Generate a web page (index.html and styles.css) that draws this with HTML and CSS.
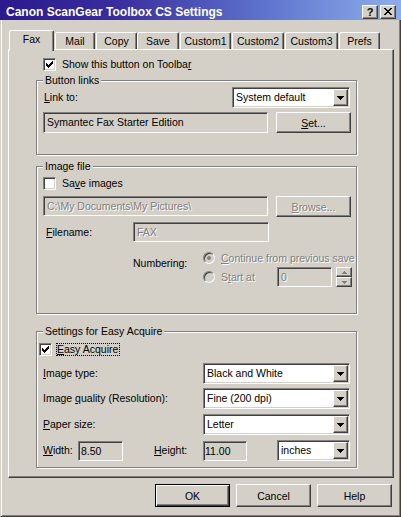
FILE: index.html
```html
<!DOCTYPE html>
<html>
<head>
<meta charset="utf-8">
<title>Canon ScanGear Toolbox CS Settings</title>
<link rel="stylesheet" href="styles.css">
</head>
<body>
<div class="window">
  <div class="titlebar">
    <span class="title">Canon ScanGear Toolbox CS Settings</span>
    <span class="tb-btn help">?</span>
    <span class="tb-btn close"><svg width="8" height="7" viewBox="0 0 8 7" shape-rendering="crispEdges"><path d="M0 0h2v1h-2zM6 0h2v1h-2zM1 1h2v1h-2zM5 1h2v1h-2zM2 2h4v1h-4zM3 3h2v1h-2zM2 4h4v1h-4zM1 5h2v1h-2zM5 5h2v1h-2zM0 6h2v1h-2zM6 6h2v1h-2z" fill="#000"/></svg></span>
  </div>
  <div class="frame">
    <div class="tabs">
      <div class="tab sel t-fax">Fax</div>
      <div class="tab t-mail">Mail</div>
      <div class="tab t-copy">Copy</div>
      <div class="tab t-save">Save</div>
      <div class="tab t-c1">Custom1</div>
      <div class="tab t-c2">Custom2</div>
      <div class="tab t-c3">Custom3</div>
      <div class="tab t-prefs">Prefs</div>
    </div>
    <div class="panel">
      <div class="check-row show-row">
        <span class="cb"><svg width="7" height="7" viewBox="0 0 7 7" shape-rendering="crispEdges"><path d="M6 0h1v1h-1zM5 1h2v1h-2zM0 2h1v1h-1zM4 2h3v1h-3zM0 3h2v1h-2zM3 3h3v1h-3zM0 4h5v1h-5zM1 5h3v1h-3zM2 6h1v1h-1z" fill="#000"/></svg></span>
        <span class="cb-label">Show this button on Toolba<u>r</u></span>
      </div>

      <div class="group g1">
        <div class="legend">Button links</div>
        <div class="row link-row">
          <span class="lbl"><u>L</u>ink to:</span>
          <div class="select w-link"><span class="val">System default</span><span class="drop"><svg width="7" height="4" viewBox="0 0 7 4" shape-rendering="crispEdges"><path d="M0 0h7v1h-7zM1 1h5v1h-5zM2 2h3v1h-3zM3 3h1v1h-1z" fill="#000"/></svg></span></div>
        </div>
        <div class="row pair-row">
          <div class="field ro w-path tall">Symantec Fax Starter Edition</div>
          <div class="btn w-btn"><span><u>S</u>et...</span></div>
        </div>
      </div>

      <div class="group g2">
        <div class="legend">Image file</div>
        <div class="check-row save-row">
          <span class="cb"></span>
          <span class="cb-label">Sa<u>v</u>e images</span>
        </div>
        <div class="row pair-row path-row">
          <div class="field ro w-path dis">C:\My Documents\My Pictures\</div>
          <div class="btn w-btn dis"><span><u>B</u>rowse...</span></div>
        </div>
        <div class="row filename-row">
          <span class="lbl w-fnlbl"><u>F</u>ilename:</span>
          <div class="field ro w-fn dis">FAX</div>
        </div>
        <div class="numbering">
          <span class="lbl num-lbl">Numbering:</span>
          <div class="radios">
            <div class="radio-row r1">
              <span class="radio on"></span>
              <span class="dis"><u>C</u>ontinue from previous save</span>
            </div>
            <div class="radio-row r2">
              <span class="radio"></span>
              <span class="dis start-lbl">S<u>t</u>art at</span>
              <div class="field ro w-start dis">0</div>
              <div class="spin">
                <span class="spin-btn"><svg width="5" height="3" viewBox="0 0 5 3" shape-rendering="crispEdges"><path d="M2 0h1v1h-1zM1 1h3v1h-3zM0 2h5v1h-5z" fill="#808080"/></svg></span>
                <span class="spin-btn"><svg width="5" height="3" viewBox="0 0 5 3" shape-rendering="crispEdges"><path d="M0 0h5v1h-5zM1 1h3v1h-3zM2 2h1v1h-1z" fill="#808080"/></svg></span>
              </div>
            </div>
          </div>
        </div>
      </div>

      <div class="group g3">
        <div class="legend">Settings for Easy Acquire</div>
        <div class="check-row ea-row">
          <span class="cb"><svg width="7" height="7" viewBox="0 0 7 7" shape-rendering="crispEdges"><path d="M6 0h1v1h-1zM5 1h2v1h-2zM0 2h1v1h-1zM4 2h3v1h-3zM0 3h2v1h-2zM3 3h3v1h-3zM0 4h5v1h-5zM1 5h3v1h-3zM2 6h1v1h-1z" fill="#000"/></svg></span>
          <span class="focus-lbl"><u>E</u>asy Acquire</span>
        </div>
        <div class="row sel-row first">
          <span class="lbl"><u>I</u>mage type:</span>
          <div class="select w-wide"><span class="val">Black and White</span><span class="drop"><svg width="7" height="4" viewBox="0 0 7 4" shape-rendering="crispEdges"><path d="M0 0h7v1h-7zM1 1h5v1h-5zM2 2h3v1h-3zM3 3h1v1h-1z" fill="#000"/></svg></span></div>
        </div>
        <div class="row sel-row second">
          <span class="lbl">Image <u>q</u>uality (Resolution):</span>
          <div class="select w-wide"><span class="val">Fine (200 dpi)</span><span class="drop"><svg width="7" height="4" viewBox="0 0 7 4" shape-rendering="crispEdges"><path d="M0 0h7v1h-7zM1 1h5v1h-5zM2 2h3v1h-3zM3 3h1v1h-1z" fill="#000"/></svg></span></div>
        </div>
        <div class="row sel-row">
          <span class="lbl"><u>P</u>aper size:</span>
          <div class="select w-wide"><span class="val">Letter</span><span class="drop"><svg width="7" height="4" viewBox="0 0 7 4" shape-rendering="crispEdges"><path d="M0 0h7v1h-7zM1 1h5v1h-5zM2 2h3v1h-3zM3 3h1v1h-1z" fill="#000"/></svg></span></div>
        </div>
        <div class="row size-row">
          <span class="lbl w-wlbl"><u>W</u>idth:</span>
          <div class="field ro w-wfield">8.50</div>
          <span class="lbl w-hlbl"><u>H</u>eight:</span>
          <div class="field ro w-hfield">11.00</div>
          <div class="select w-units"><span class="val">inches</span><span class="drop"><svg width="7" height="4" viewBox="0 0 7 4" shape-rendering="crispEdges"><path d="M0 0h7v1h-7zM1 1h5v1h-5zM2 2h3v1h-3zM3 3h1v1h-1z" fill="#000"/></svg></span></div>
        </div>
      </div>
    </div>
    <div class="buttons">
      <div class="btn dlg default">OK</div>
      <div class="btn dlg">Cancel</div>
      <div class="btn dlg">Help</div>
    </div>
  </div>
</div>
</body>
</html>
```

FILE: styles.css
```css
* { box-sizing: border-box; }
html, body { margin: 0; padding: 0; }
body {
  font-family: "Liberation Sans", Arial, sans-serif;
  font-size: 10.5px;
  color: #000;
  background: #d4d0c8;
}
u { text-decoration: underline; text-underline-offset: 1px; }

.window {
  width: 401px;
  height: 517px;
  display: flex;
  flex-direction: column;
  background: #d4d0c8;
  overflow: hidden;
}

/* title bar */
.titlebar {
  height: 20px;
  flex: none;
  display: flex;
  align-items: center;
  padding: 3px 5px 0 6px;
  background: linear-gradient(90deg, #2a1a8c 0%, #3a2e9e 30%, #5d72cc 65%, #8eaeea 100%);
}
.title {
  flex: 1;
  color: #fff;
  font-weight: bold;
  font-size: 12px;
  white-space: nowrap;
}
.tb-btn {
  width: 16px;
  height: 14px;
  display: flex;
  align-items: center;
  justify-content: center;
  background: #d4d0c8;
  border: 1px solid;
  border-color: #fff #404040 #404040 #fff;
  box-shadow: inset -1px -1px #808080;
  font-weight: bold;
  font-size: 11px;
  line-height: 12px;
}
.help { margin-right: 2px; }

/* frame */
.frame {
  flex: 1;
  display: flex;
  flex-direction: column;
  border-left: 1px solid #d4d0c8;
  border-right: 1px solid #404040;
  border-bottom: 1px solid #404040;
  box-shadow: inset 1px 0 #fff, inset -1px -1px #808080;
}

/* tabs */
.tabs {
  display: flex;
  align-items: flex-end;
  height: 21px;
  margin-top: 10px;
  padding-left: 8px;
  position: relative;
  z-index: 1;
}
.tab {
  height: 17px;
  margin-bottom: 2px;
  border: 1px solid;
  border-bottom: none;
  border-color: #fff #404040 transparent #fff;
  box-shadow: inset -1px 0 #808080;
  border-radius: 2px 2px 0 0;
  display: flex;
  align-items: center;
  justify-content: center;
  background: #d4d0c8;
  white-space: nowrap;
}
.tab.sel {
  height: 21px;
  margin-bottom: 0;
  padding-bottom: 5px;
}
.t-fax { width: 45px; margin-right: 1px; }
.t-mail { width: 40px; margin-right: 1px; }
.t-copy { width: 41px; }
.t-save { width: 42px; margin-right: 1px; }
.t-c1 { width: 51px; margin-right: 1px; }
.t-c2 { width: 52px; margin-right: 1px; }
.t-c3 { width: 53px; margin-right: 1px; }
.t-prefs { width: 41px; }

/* panel */
.panel {
  margin: -2px 6px 0 7px;
  height: 429px;
  border: 1px solid;
  border-color: #fff #404040 #404040 #fff;
  box-shadow: inset -1px -1px #808080;
  display: flex;
  flex-direction: column;
  align-items: flex-start;
}

/* checkbox */
.check-row { display: flex; align-items: center; height: 13px; }
.cb {
  width: 13px;
  height: 13px;
  flex: none;
  background: #fff;
  border: 1px solid;
  border-color: #808080 #fff #fff #808080;
  box-shadow: inset 1px 1px #404040, inset -1px -1px #d4d0c8;
  display: flex;
  padding: 2px 0 0 2px;
}
.cb svg { display: block; }
.cb-label { margin-left: 6px; line-height: 13px; white-space: nowrap; }
.show-row { margin: 8px 0 0 34px; }

/* groups */
.group {
  margin-left: 27px;
  width: 321px;
  border: 1px solid #808080;
  box-shadow: inset 1px 1px #fff, 1px 1px #fff;
  display: flex;
  flex-direction: column;
  align-items: flex-start;
}
.g1 { margin-top: 9px; height: 75px; }
.g2 { margin-top: 11px; height: 148px; }
.g3 { margin-top: 17px; height: 137px; }
.legend {
  margin: -7px 0 0 6px;
  padding: 0 2px;
  height: 13px;
  line-height: 13px;
  background: #d4d0c8;
  white-space: nowrap;
}

.row { display: flex; align-items: center; }
.lbl { line-height: 13px; white-space: nowrap; }

.link-row {
  align-self: stretch;
  justify-content: space-between;
  height: 21px;
  margin: 0 6px 0 7px;
}
.pair-row { margin: 4px 0 0 6px; align-items: flex-start; }
.pair-row .btn { margin-left: 8px; }

/* fields */
.field {
  height: 20px;
  border: 1px solid;
  border-color: #808080 #fff #fff #808080;
  box-shadow: inset 1px 1px #404040, inset -1px -1px #d4d0c8;
  padding: 0 0 0 3px;
  line-height: 18px;
  white-space: nowrap;
  overflow: hidden;
  background: #fff;
}
.field.ro { background: #d4d0c8; }
.field.tall { height: 21px; line-height: 19px; }
.w-path { width: 225px; }
.w-fn { width: 136px; }
.w-start { width: 55px; }
.w-wfield { width: 45px; padding-left: 2px; }
.w-hfield { width: 44px; padding-left: 1px; }

/* buttons */
.btn {
  height: 21px;
  border: 1px solid;
  border-color: #fff #404040 #404040 #fff;
  box-shadow: inset -1px -1px #808080;
  background: #d4d0c8;
  display: flex;
  align-items: center;
  justify-content: center;
  white-space: nowrap;
}
.w-btn { width: 75px; }

.dis { color: #808080; text-shadow: 1px 1px 0 #fff; }

/* selects */
.select {
  height: 21px;
  display: flex;
  align-items: stretch;
  background: #fff;
  border: 1px solid;
  border-color: #808080 #fff #fff #808080;
  box-shadow: inset 1px 1px #404040, inset -1px -1px #d4d0c8;
  padding: 1px;
}
.select .val {
  flex: 1;
  padding-left: 2px;
  line-height: 17px;
  white-space: nowrap;
  overflow: hidden;
}
.select .drop {
  width: 15px;
  flex: none;
  background: #d4d0c8;
  border: 1px solid;
  border-color: #fff #404040 #404040 #fff;
  box-shadow: inset -1px -1px #808080;
  display: flex;
  align-items: center;
  justify-content: center;
}
.select .drop svg { display: block; }
.w-link { width: 118px; }
.w-wide { width: 147px; }
.w-units { width: 73px; margin-left: 30px; }

/* image file group */
.save-row { margin: 4px 0 0 6px; }
.path-row { margin-top: 6px; }
.path-row .field { margin-top: 0; }
.filename-row { margin: 5px 0 0 9px; align-items: center; height: 20px; }
.w-fnlbl { width: 87px; }

.numbering { display: flex; margin: 7px 0 0 96px; }
.num-lbl { width: 70px; margin-top: 8px; }
.radios { display: flex; flex-direction: column; }
.radio-row { display: flex; align-items: center; white-space: nowrap; }
.r1 { height: 18px; }
.r2 { height: 20px; }
.radio {
  width: 12px;
  height: 12px;
  flex: none;
  margin-right: 6px;
  border-radius: 50%;
  border: 1px solid;
  border-color: #808080 #fff #fff #808080;
  box-shadow: inset 1px 1px 0 #404040;
  background: #d4d0c8;
  display: flex;
  align-items: center;
  justify-content: center;
}
.radio.on::after {
  content: "";
  width: 4px;
  height: 4px;
  border-radius: 50%;
  background: #808080;
}
.start-lbl { width: 56px; }
.spin { display: flex; flex-direction: column; width: 16px; height: 20px; margin-left: 4px; }
.spin-btn {
  flex: 1;
  background: #d4d0c8;
  border: 1px solid;
  border-color: #fff #404040 #404040 #fff;
  box-shadow: inset -1px -1px #808080;
  display: flex;
  align-items: center;
  justify-content: center;
}
.spin-btn svg { display: block; }

/* easy acquire group */
.ea-row { margin: 5px 0 0 2px; }
.focus-lbl {
  margin-left: 4px;
  height: 13px;
  line-height: 11px;
  border: 1px dotted #000;
  padding: 0 1px 0 0;
  white-space: nowrap;
}
.sel-row {
  align-self: stretch;
  justify-content: space-between;
  height: 21px;
  margin: 5px 6px 0 6px;
}
.sel-row.first { margin-top: 7px; }
.sel-row.second { margin-top: 4px; }
.size-row { height: 21px; margin: 5px 0 0 6px; }
.w-wlbl { width: 35px; }
.w-hlbl { width: 49px; margin-left: 31px; }

/* dialog buttons */
.buttons {
  display: flex;
  justify-content: flex-end;
  gap: 6px;
  margin: 6px 8px 0 0;
}
.btn.dlg { width: 75px; height: 23px; }
.btn.default {
  border: 1px solid #000;
  box-shadow: inset 1px 1px #fff, inset -1px -1px #404040, inset -2px -2px #808080;
}
```
